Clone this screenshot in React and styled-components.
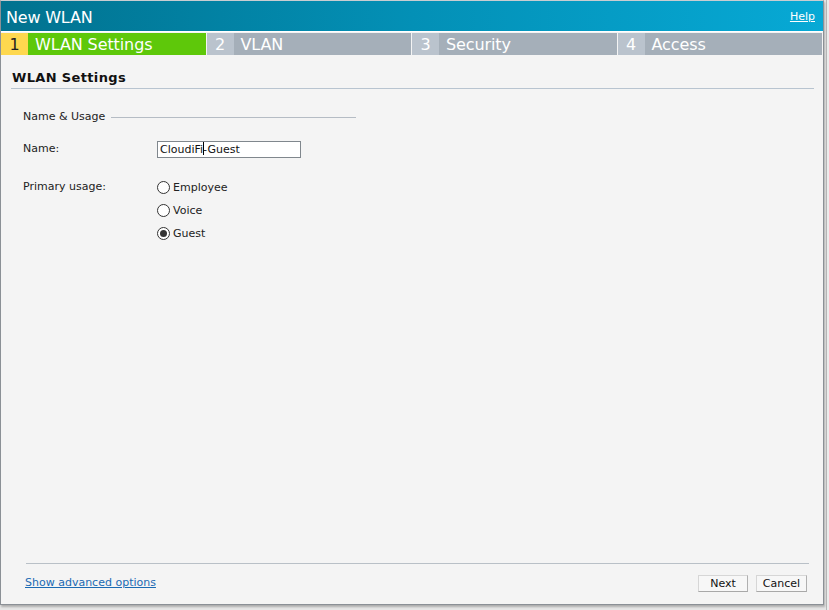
import React from "react";
import styled, { createGlobalStyle } from "styled-components";

const Global = createGlobalStyle`
  html, body { margin: 0; padding: 0; }
  body {
    width: 829px; height: 610px; overflow: hidden;
    background: #dcdcdc;
    font-family: "DejaVu Sans", Verdana, sans-serif;
  }
`;

const Page = styled.div`
  width: 829px;
  height: 610px;
  background: linear-gradient(to right, #e6e6e6 0, #e6e6e6 826px, #b8b8b8 826px, #b8b8b8 827px, #ececec 827px);
`;

const Dialog = styled.div`
  box-sizing: border-box;
  width: 824px;
  height: 605px;
  border: 1px solid #8b9096;
  border-top-color: #c9cdd1;
  background: #f4f4f4;
  display: flex;
  flex-direction: column;
  box-shadow: 1px 2px 2px rgba(0,0,0,0.25);
`;

const TitleBar = styled.div`
  height: 30px;
  background: linear-gradient(to right, #01728f 0%, #0390b6 50%, #07a9d5 100%);
  display: flex;
  align-items: center;
  justify-content: space-between;
  padding: 0 7px 0 5px;
  border-bottom: 1px solid #ffffff;
`;

const Title = styled.div`
  color: #ffffff;
  font-size: 16px;
  letter-spacing: -0.2px;
  margin-top: 3px;
`;

const Help = styled.a`
  color: #ffffff;
  font-size: 11px;
  text-decoration: underline;
  margin-top: 1px;
  margin-right: 1px;
`;

const Tabs = styled.div`
  display: grid;
  grid-template-columns: repeat(4, 1fr);
  column-gap: 1px;
  height: 22px;
  margin-top: 1px;
  background: #f4f4f4;
  border-right: 1px solid #f4f4f4;
`;

const Tab = styled.div`
  display: flex;
  height: 22px;
  background: ${p => (p.$active ? "#5ec80a" : "#a5afb9")};
  color: #ffffff;
  font-size: 16px;
  line-height: 24px;
`;

const TabNum = styled.div`
  width: 27px;
  text-align: center;
  flex: none;
  background: ${p => (p.$active ? "#fed84f" : "#bac3cd")};
  color: ${p => (p.$active ? "#222222" : "#ffffff")};
`;

const TabLabel = styled.div`
  padding-left: 7px;
  letter-spacing: -0.1px;
`;

const Body = styled.div`
  flex: 1;
  display: flex;
  flex-direction: column;
  padding: 14px 9px 0 10px;
`;

const Heading = styled.div`
  font-weight: bold;
  font-size: 13px;
  letter-spacing: 0.35px;
  color: #111;
  padding: 1px 0 0 1px;
  height: 18px;
  border-bottom: 1px solid #b8c4d0;
`;

const Content = styled.div`
  flex: 1;
  padding: 21px 0 0 12px;
  font-size: 11px;
  line-height: 13px;
  color: #222;
`;

const Legend = styled.div`
  display: flex;
  align-items: center;
  width: 333px;
  gap: 6px;
  &::after {
    content: "";
    flex: 1;
    border-top: 1px solid #b5bcc4;
    margin-top: 1px;
  }
`;

const FormRow = styled.div`
  display: flex;
  align-items: ${p => (p.$center ? "center" : "flex-start")};
  margin-top: ${p => p.$mt}px;
`;

const Label = styled.div`
  width: 134px;
  flex: none;
  line-height: 14px;
  margin-top: ${p => p.$dy || 0}px;
`;

const TextBox = styled.div`
  box-sizing: border-box;
  width: 144px;
  height: 17px;
  border: 1px solid #80878d;
  background: #fff;
  font-size: 11px;
  line-height: 15px;
  padding-left: 2px;
  color: #111;
`;

const Caret = styled.span`
  display: inline-block;
  width: 1px;
  height: 13px;
  background: #000;
  vertical-align: -2px;
  margin-right: -1px;
`;

const Radios = styled.div`
  display: flex;
  flex-direction: column;
  gap: 9px;
`;

const RadioRow = styled.label`
  display: flex;
  align-items: center;
  gap: 3px;
  height: 14px;
`;

const RadioCircle = styled.span`
  box-sizing: border-box;
  width: 13px;
  height: 13px;
  border-radius: 50%;
  border: 1px solid #333;
  background: #fff;
  display: flex;
  align-items: center;
  justify-content: center;
  &::after {
    content: "";
    width: 7px;
    height: 7px;
    border-radius: 50%;
    background: ${p => (p.$checked ? "#333" : "transparent")};
  }
`;

const Footer = styled.div`
  margin: 0 5px 0 15px;
  border-top: 1px solid #b9c0c7;
  height: 40px;
  display: flex;
  align-items: flex-start;
  justify-content: space-between;
`;

const Link = styled.a`
  color: #1a6ab3;
  font-size: 11px;
  line-height: 13px;
  text-decoration: underline;
  margin: 12px 0 0 -1px;
`;

const Buttons = styled.div`
  display: flex;
  gap: 8px;
  margin: 11px 2px 0 0;
`;

const Button = styled.button`
  box-sizing: border-box;
  height: 17px;
  width: ${p => p.$w}px;
  padding: 0;
  font-family: "DejaVu Sans", Verdana, sans-serif;
  font-size: 11px;
  color: #111;
  background: #f7f7f7;
  border: 1px solid #d6d6d6;
  border-right-color: #b0b0b0;
  border-bottom-color: #a8a8a8;
  line-height: 15px;
`;

const tabs = [
  ["1", "WLAN Settings"],
  ["2", "VLAN"],
  ["3", "Security"],
  ["4", "Access"],
];

export default function App() {
  return (
    <Page>
      <Global />
      <Dialog>
        <TitleBar>
          <Title>New WLAN</Title>
          <Help href="#">Help</Help>
        </TitleBar>
        <Tabs>
          {tabs.map(([n, l], i) => (
            <Tab key={n} $active={i === 0}>
              <TabNum $active={i === 0}>{n}</TabNum>
              <TabLabel>{l}</TabLabel>
            </Tab>
          ))}
        </Tabs>
        <Body>
          <Heading>WLAN Settings</Heading>
          <Content>
            <Legend>Name &amp; Usage</Legend>
            <FormRow $mt={18} $center>
              <Label $dy={-2}>Name:</Label>
              <TextBox>
                CloudiFi<Caret />-Guest
              </TextBox>
            </FormRow>
            <FormRow $mt={22}>
              <Label>Primary usage:</Label>
              <Radios>
                <RadioRow>
                  <RadioCircle />
                  Employee
                </RadioRow>
                <RadioRow>
                  <RadioCircle />
                  Voice
                </RadioRow>
                <RadioRow>
                  <RadioCircle $checked />
                  Guest
                </RadioRow>
              </Radios>
            </FormRow>
          </Content>
          <Footer>
            <Link href="#">Show advanced options</Link>
            <Buttons>
              <Button $w={50}>Next</Button>
              <Button $w={51}>Cancel</Button>
            </Buttons>
          </Footer>
        </Body>
      </Dialog>
    </Page>
  );
}
